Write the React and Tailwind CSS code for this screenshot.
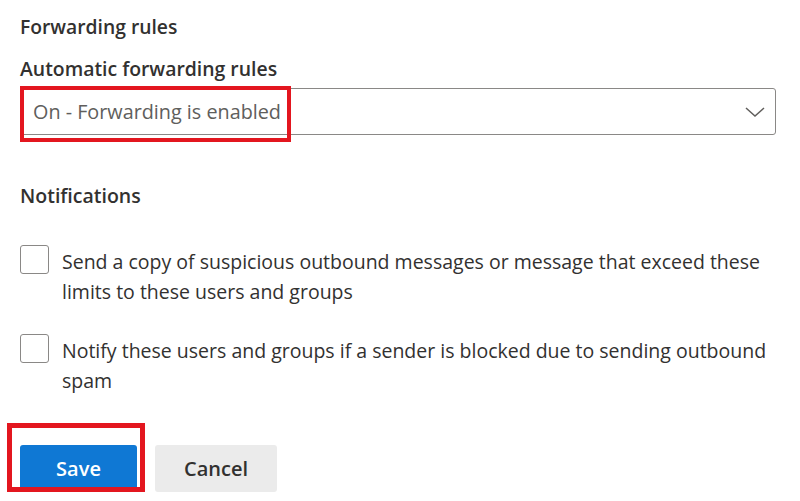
import React from "react";

function Chevron() {
  return (
    <svg width="20" height="10" viewBox="0 0 20 10" fill="none">
      <path d="M1 1L10 9L19 1" stroke="#605e5c" strokeWidth="1.5" />
    </svg>
  );
}

function CheckRow({ children }) {
  return (
    <label className="flex items-start gap-[13px]">
      <span className="mt-[-2px] w-[29px] h-[29px] shrink-0 rounded-[3px] border border-[#8a8886] bg-white" />
      <span className="text-[19.5px] leading-[30px] text-[#323130]">{children}</span>
    </label>
  );
}

export default function App() {
  return (
    <div
      className="w-[800px] h-[501px] bg-white overflow-hidden px-5 pt-3"
      style={{ fontFamily: '"Open Sans", "Noto Sans", sans-serif' }}
    >
      <h2 className="text-[19.3px] leading-[30px] font-semibold text-[#323130]">
        Forwarding rules
      </h2>
      <div className="mt-3 text-[19.4px] leading-[30px] font-semibold text-[#323130]">
        Automatic forwarding rules
      </div>

      {/* Dropdown */}
      <div className="relative mt-1 w-[756px]">
        <div className="h-[47px] flex items-center justify-between border border-[#8a8886] rounded-[3px] pl-3 pr-[10px]">
          <span className="text-[19.8px] text-[#605e5c]">On - Forwarding is enabled</span>
          <Chevron />
        </div>
        <div className="absolute left-0 top-[-2px] w-[271px] h-[56px] border-4 border-[#e3161f]" />
      </div>

      <div className="mt-[46px] text-[19.5px] leading-[30px] font-semibold text-[#323130]">
        Notifications
      </div>

      <div className="mt-[36px] flex flex-col gap-[29px]">
        <CheckRow>
          Send a copy of suspicious outbound messages or message that exceed these
          limits to these users and groups
        </CheckRow>
        <CheckRow>
          Notify these users and groups if a sender is blocked due to sending outbound
          spam
        </CheckRow>
      </div>

      {/* Actions */}
      <div className="mt-[49px] flex gap-[18px]">
        <div className="relative">
          <button className="w-[117px] h-[47px] rounded-[3px] bg-[#0f78d4] text-white text-[20px] font-semibold">
            Save
          </button>
          <div className="absolute left-[-13px] top-[-22px] w-[138px] h-[69px] border-[5px] border-[#e3161f]" />
        </div>
        <button className="w-[122px] h-[47px] rounded-[3px] bg-[#ebebeb] text-[#323130] text-[20px] font-semibold">
          Cancel
        </button>
      </div>
    </div>
  );
}
